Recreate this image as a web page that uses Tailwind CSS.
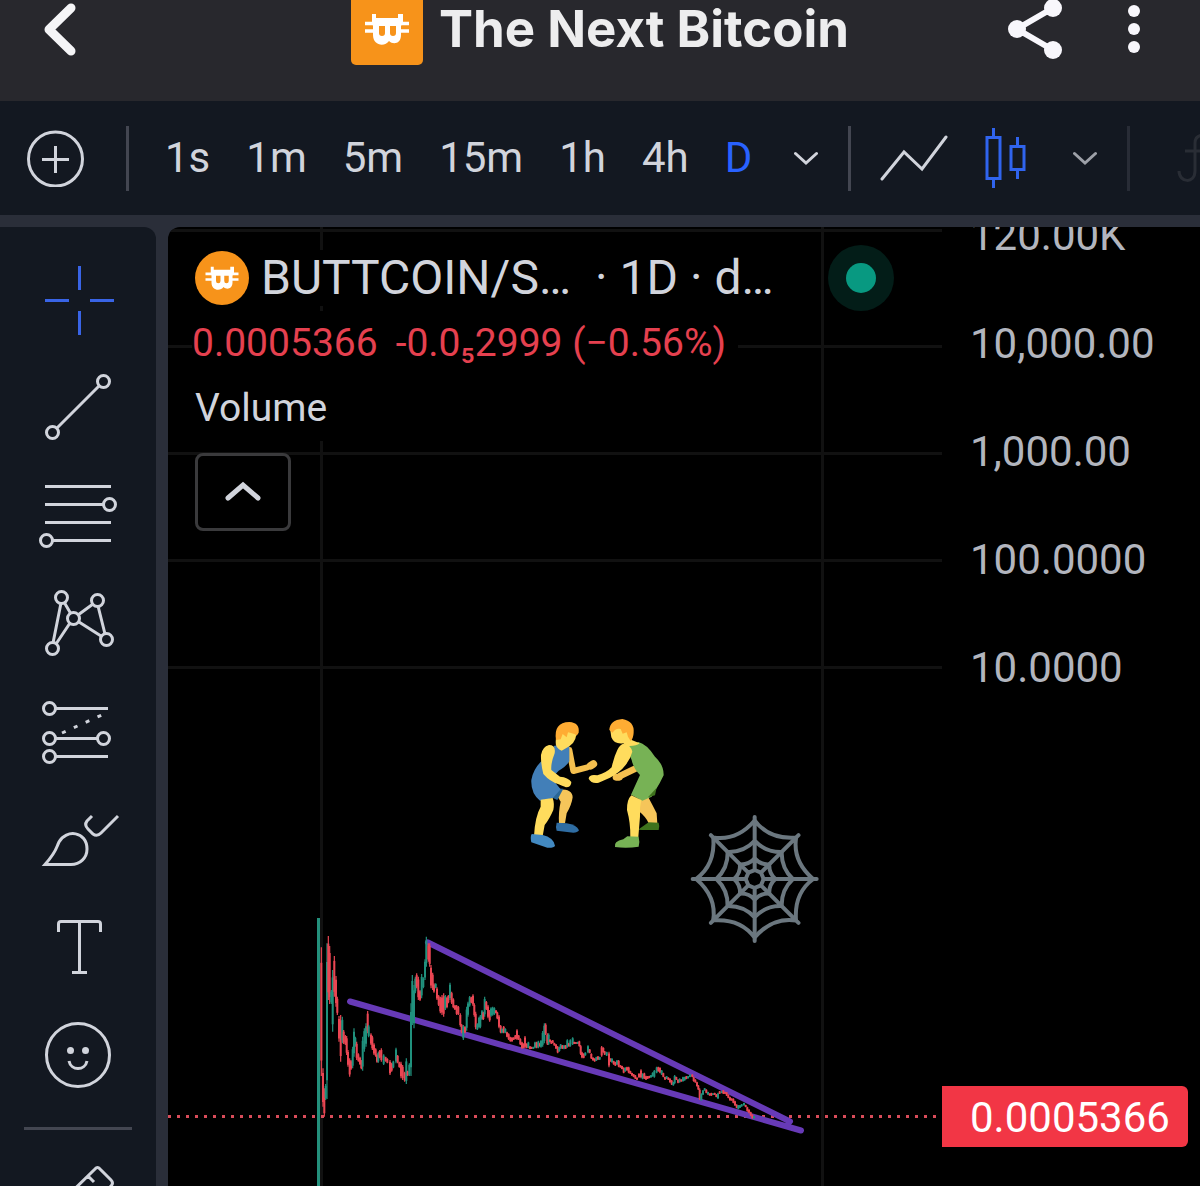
<!DOCTYPE html>
<html lang="en">
<head>
    <meta charset="UTF-8">
    <meta name="viewport" content="width=device-width, initial-scale=1.0">
    <title>The Next Bitcoin</title>
    <script src="https://cdn.jsdelivr.net/npm/@tailwindcss/browser@4"></script>
</head>
<body class="bg-[#2a2e39] font-['Roboto',sans-serif] text-[#d1d4dc]">
    <!-- Shared logo -->
    <svg class="hidden">
        <symbol id="coin" viewBox="0 0 72 72">
            <path fill="#fff" fill-rule="evenodd" d="M21 21H25V25H47V21H52V29L50 33V42C50 51 42 52 38 48C34 54 22 53 22 42V33L21 29ZM28 33V40Q28 43 31 43Q34 43 34 40V33ZM39 33V40Q39 43 42 43Q45 43 45 40V33Z" />
            <path fill="none" stroke="#fff" stroke-width="3.500" d="M14 30.500H24M14 38H24M48 30.500H58M48 38H58" />
        </symbol>
    </svg>

    <div class="flex h-screen flex-col overflow-hidden">
        <header class="h-[101px] shrink-0 bg-[#28282d]">
            <div class="relative flex h-[58px] items-center justify-between pr-[55px] pl-[40px]">
                <button aria-label="Back">
                    <svg class="h-[58px] w-[40px]" viewBox="0 0 40 58" fill="none" stroke="#f5f5f7" stroke-width="9" stroke-linecap="round" stroke-linejoin="round"><path d="M31 8L9 29.500L31 51" /></svg>
                </button>
                <div class="absolute inset-x-0 flex items-center justify-center gap-4">
                    <svg class="h-[72px] w-[72px] rounded-[5px] bg-[#f7931a]"><use href="#coin" /></svg>
                    <h1 class="font-['Inter',sans-serif] text-[51px] leading-[60px] font-bold whitespace-nowrap text-[#ededee]">The Next Bitcoin</h1>
                </div>
                <div class="relative flex items-center gap-[61px]">
                    <button aria-label="Share">
                        <svg class="h-[60px] w-[58px]" viewBox="0 0 58 60" fill="#f8f7fc" stroke="#f8f7fc"><path d="M47 9L11 30L47 51" fill="none" stroke-width="6" /><g stroke="none"><circle cx="47" cy="9" r="9" /><circle cx="11" cy="30" r="9" /><circle cx="47" cy="51" r="9" /></g></svg>
                    </button>
                    <button aria-label="More">
                        <svg class="h-[58px] w-[20px]" viewBox="0 0 20 58" fill="#f8f7fc"><circle cx="9" cy="11" r="6" /><circle cx="9" cy="29" r="6" /><circle cx="9" cy="47" r="6" /></svg>
                    </button>
                </div>
            </div>
        </header>

        <nav class="flex h-[114px] shrink-0 items-center overflow-hidden bg-[#131821] pl-[27px] text-[42px] leading-[48px]">
            <button class="shrink-0" aria-label="Compare">
                <svg class="h-[58px] w-[57px]" viewBox="0 0 57 58" fill="none" stroke="#d1d4dc" stroke-width="3"><circle cx="28.500" cy="30" r="27" /><path d="M15 30.500H42M28.500 17V44" /></svg>
            </button>
            <div class="ml-[42px] h-[65px] w-[3px] shrink-0 bg-[#434651]"></div>
            <div class="ml-[36px] flex shrink-0 gap-9">
                <button>1s</button>
                <button>1m</button>
                <button>5m</button>
                <button>15m</button>
                <button>1h</button>
                <button>4h</button>
                <button class="text-[#2962ff]">D</button>
            </div>
            <button class="ml-[42px] shrink-0" aria-label="More intervals">
                <svg class="h-[24px] w-[24px]" viewBox="0 0 24 24" fill="none" stroke="#d1d4dc" stroke-width="3" stroke-linecap="round"><path d="M1.500 7.500L12 17L22.500 7.500" /></svg>
            </button>
            <div class="ml-[30px] h-[65px] w-[3px] shrink-0 bg-[#434651]"></div>
            <button class="ml-[29px] shrink-0" aria-label="Line">
                <svg class="h-[60px] w-[68px]" viewBox="0 0 68 60" fill="none" stroke="#d1d4dc" stroke-width="3" stroke-linecap="round"><path d="M2 51L24 24L42 41L66 9" /></svg>
            </button>
            <button class="ml-[37px] shrink-0" aria-label="Candles">
                <svg class="h-[62px] w-[42px]" viewBox="0 0 42 62" fill="none" stroke="#3064ee" stroke-width="3"><path d="M8.500 1V10M8.500 52V61M2 10.500H15V51.500H2ZM32.500 10V19M32.500 43V52M26 19.500H39V42.500H26Z" /></svg>
            </button>
            <button class="ml-[46px] shrink-0" aria-label="More chart types">
                <svg class="h-[24px] w-[24px]" viewBox="0 0 24 24" fill="none" stroke="#9da0a8" stroke-width="3" stroke-linecap="round"><path d="M1.500 7.500L12 17L22.500 7.500" /></svg>
            </button>
            <div class="ml-[30px] h-[65px] w-[3px] shrink-0 bg-[#282c36]"></div>
            <button class="ml-[47px] shrink-0" aria-label="Indicators">
                <svg class="h-[60px] w-[40px]" viewBox="0 0 40 60" fill="none" stroke="#292d35" stroke-width="3"><path d="M2 43c0 12 16 13 16 0V15c0-6 4-8 10-8M8 23H28" /></svg>
            </button>
        </nav>

        <main class="flex min-h-0 flex-1 gap-3 pt-3">
            <!-- Drawing tools -->
            <aside class="flex w-[156px] shrink-0 flex-col items-center overflow-hidden rounded-tr-xl bg-[#131821] pt-[19px]">
                <button class="flex h-[108px] shrink-0 items-center" aria-label="Cross">
                    <svg class="h-[84px] w-[84px]" viewBox="0 0 84 84" fill="none" stroke="#3964e6" stroke-width="3"><path d="M43.500 8V32M43.500 53V77M9 42.500H33M54 42.500H78" /></svg>
                </button>
                <button class="flex h-[108px] shrink-0 items-center" aria-label="Trend line">
                    <svg class="h-[84px] w-[84px]" viewBox="0 0 84 84" fill="none" stroke="#d1d4dc" stroke-width="3"><path d="M21 62L63 20" /><circle cx="67.500" cy="15.500" r="6" /><circle cx="16.500" cy="66.500" r="6" /></svg>
                </button>
                <button class="flex h-[108px] shrink-0 items-center" aria-label="Fib retracement">
                    <svg class="h-[84px] w-[84px]" viewBox="0 0 84 84" fill="none" stroke="#d1d4dc" stroke-width="3"><path d="M9 12.500H75M9 30.500H68M9 48.500H75M16 66.500H75" /><circle cx="73.500" cy="30.500" r="6" /><circle cx="10.500" cy="66.500" r="6" /></svg>
                </button>
                <button class="flex h-[108px] shrink-0 items-center" aria-label="Patterns">
                    <svg class="h-[84px] w-[84px]" viewBox="0 0 84 84" fill="none" stroke="#d1d4dc" stroke-width="3"><path d="M25 21L17 61M28 20L35 32M42 33L57 22M34 41L20 62M43 40L65 54M62 24L69 52" /><circle cx="25.500" cy="15.500" r="6" /><circle cx="61.500" cy="18.500" r="6" /><circle cx="37.500" cy="36.500" r="6" /><circle cx="70.500" cy="57.500" r="6" /><circle cx="16.500" cy="66.500" r="6" /></svg>
                </button>
                <button class="flex h-[108px] shrink-0 items-center" aria-label="Prediction">
                    <svg class="h-[84px] w-[84px]" viewBox="0 0 84 84" fill="none" stroke="#d1d4dc" stroke-width="3"><path d="M19 18.500H72M19 48.500H62M19 66.500H72" /><path d="M26 43L68 24" stroke-dasharray="4 9" /><circle cx="13.500" cy="18.500" r="6" /><circle cx="13.500" cy="48.500" r="6" /><circle cx="67.500" cy="48.500" r="6" /><circle cx="13.500" cy="66.500" r="6" /></svg>
                </button>
                <button class="flex h-[108px] shrink-0 items-center" aria-label="Brush">
                    <svg class="h-[84px] w-[84px]" viewBox="0 0 84 84" fill="none" stroke="#d1d4dc" stroke-width="3"><path d="M9 66.500C21 53 20 50 23 44C30 31 51 33 51 51C51 60 44 66.500 35 66.500Z" /><path d="M56 18L51 23Q48 27 52 31L57 36Q61 39 65 35L82 18" /></svg>
                </button>
                <button class="flex h-[108px] shrink-0 items-center" aria-label="Text">
                    <svg class="h-[84px] w-[84px]" viewBox="0 0 84 84" fill="none" stroke="#d1d4dc" stroke-width="3"><path d="M22.500 26V18Q22.500 15.500 25 15.500H62Q64.500 15.500 64.500 18V26M43.500 16V66M36 66.500H51" /></svg>
                </button>
                <button class="flex h-[108px] shrink-0 items-center" aria-label="Icons">
                    <svg class="h-[84px] w-[84px]" viewBox="0 0 84 84" fill="none" stroke="#d1d4dc" stroke-width="3"><circle cx="42" cy="41" r="31.500" /><path d="M33 47C35 57 49 57 51 47" /><g fill="#d1d4dc" stroke="none"><circle cx="34.500" cy="36.500" r="3.500" /><circle cx="49.500" cy="36.500" r="3.500" /></g></svg>
                </button>
                <div class="mt-[17px] h-[3px] w-[108px] shrink-0 bg-[#434651]"></div>
                <button class="flex h-[140px] shrink-0 items-center" aria-label="Measure">
                    <svg class="h-[84px] w-[84px]" viewBox="0 0 84 84" fill="none" stroke="#d1d4dc" stroke-width="3"><path d="M59 11Q61.500 8 64 11L75 22Q78 25 75 28L28 75Q25 77 22 75L11 64Q8 61 11 58ZM52 18L58 24M42 28L50 36M32 38L38 44" /></svg>
                </button>
            </aside>

            <section class="relative flex min-w-0 flex-1 justify-between overflow-hidden rounded-tl-xl bg-black">
                <!-- Plot, drawn in window coordinates -->
                <svg class="absolute top-0 left-0 h-[959px] w-[774px]" viewBox="168 227 774 959" fill="none">
                    <path stroke="#111" stroke-width="3" d="M168 230.500H942M168 346.500H942M168 453.500H942M168 560.500H942M168 667.500H942M321.500 227V1186M822.500 227V1186" />
                    <path stroke="#d94c5a" stroke-width="3" stroke-dasharray="3 6" d="M168 1116.500H942" />
                    <path stroke="#673ab7" stroke-width="6" stroke-linecap="round" d="M428 942.500L790 1121.500M350 1001.500L801 1130.500" />
                    <path stroke="#23907c" stroke-width="3" d="M318.500 918V1186" />
                    <g id="candles"></g>

                    <!-- Wrestlers -->
                    <g transform="translate(510 700) scale(0.3333)">
                        <g stroke-linecap="round" stroke-linejoin="round">
                            <path stroke="#f5c04f" stroke-width="18" d="M178 150L190 213L232 202" />
                            <path stroke="#f5c04f" stroke-width="23" d="M242 197L250 192" />
                            <path stroke="#f5c04f" stroke-width="20" d="M372 208L330 228" />
                            <path stroke="#f5c04f" stroke-width="20" d="M318 232L328 232" />
                        </g>
                        <path fill="#f5c55a" d="M150 268Q187 268 188 292Q185 315 170 340L165 370H147Q145 335 152 305L140 285Z" />
                        <path fill="#2a6797" d="M118 265L160 266L142 300L120 290Z" />
                        <path fill="#2f6da3" d="M140 368L170 370Q200 375 207 391Q203 398 190 398L140 392Q136 380 140 368Z" />
                        <path fill="#f5c55a" d="M385 300L415 292Q430 320 440 340L442 370H416Q410 352 385 332Z" />
                        <path fill="#3e721d" d="M386 388L416 367L446 368Q450 378 446 390H396Q384 390 386 388Z" />
                        <path fill="#427fb8" d="M133 137L155 134L166 140L178 138L178 184Q168 200 146 212L125 235L152 268L128 295L90 302Q62 280 64 240Q70 205 98 180Z" />
                        <path fill="#ffdc5d" d="M92 299L128 294Q134 310 130 330Q118 358 104 375L98 408H72Q75 350 92 320Z" />
                        <path fill="#4289c1" d="M65 402L98 405Q130 412 135 437Q132 444 112 443L64 427Q60 410 65 402Z" />
                        <path fill="#ffdc5d" d="M117 135Q138 135 134 160Q122 190 124 210L150 230Q175 232 184 246Q184 262 168 262Q152 256 146 253Q120 245 100 222Q92 190 93 165Q97 140 117 135Z" />
                        <path fill="#ffdc5d" d="M140 92L200 84Q202 125 178 139L155 152Q136 145 137 126Z" />
                        <path fill="#ffac33" d="M138 120Q130 67 178 66Q210 68 206 98L200 107Q194 101 174 97L170 112L158 102L152 118Z" />
                        <path fill="#77b255" d="M345 133Q365 140 385 126Q410 132 435 170Q462 195 461 226Q450 250 437 270L425 290L397 302L363 284L390 225Q370 205 365 180Z" />
                        <path fill="#3e721d" d="M440 263L435 286L414 292Z" />
                        <path fill="#ffdc5d" d="M364 286L394 300Q388 325 390 350L385 412H361Q362 370 351 330Q350 300 364 286Z" />
                        <path fill="#77b255" d="M352 409L386 410Q390 425 386 440Q350 446 315 441Q310 425 340 418Z" />
                        <path fill="#ffdc5d" d="M340 131Q362 133 367 155Q362 175 347 195Q330 217 300 233L266 248Q244 252 236 236Q237 222 262 226Q290 218 305 202Q312 170 322 150Q330 133 340 131Z" />
                        <path fill="#ffdc5d" d="M300 84L358 84L365 120L389 130Q378 140 350 138L340 130Q313 134 304 112Z" />
                        <path fill="#ffac33" d="M298 90Q300 60 337 57Q374 64 371 98Q370 115 362 123L354 110L350 97L338 101L332 87Q316 84 308 98Z" />
                    </g>

                    <!-- Web: one wedge turned eight times -->
                    <g transform="translate(754.6667 879) scale(0.3333)" stroke="#6b777f" stroke-width="12" stroke-linecap="round">
                        <g id="wedge">
                            <path d="M0 -27V-186M0 -27L19 -19M0 -62Q18 -42 44 -44M0 -115Q32 -80 81 -81M0 -176Q42 -118 124 -124" />
                        </g>
                        <use href="#wedge" transform="rotate(45)" />
                        <use href="#wedge" transform="rotate(90)" />
                        <use href="#wedge" transform="rotate(135)" />
                        <use href="#wedge" transform="rotate(180)" />
                        <use href="#wedge" transform="rotate(225)" />
                        <use href="#wedge" transform="rotate(270)" />
                        <use href="#wedge" transform="rotate(315)" />
                    </g>
                </svg>

                <!-- Legend -->
                <div class="relative flex flex-col items-start pt-[18px] pl-[24px] whitespace-nowrap">
                    <div class="flex h-[66px] items-center pl-[3px] text-[48px] leading-[56px]">
                        <svg class="mr-3 h-[54px] w-[54px] rounded-full bg-[#f7931a]"><use href="#coin" /></svg>
                        <div class="flex bg-black">
                            <span>BUTTCOIN/S…</span>
                            <span class="ml-6">·</span>
                            <span class="ml-3">1D · d…</span>
                        </div>
                        <span class="ml-[54px] flex h-[66px] w-[66px] items-center justify-center rounded-full bg-[#031d18]">
                            <span class="h-[30px] w-[30px] rounded-full bg-[#089981]"></span>
                        </span>
                    </div>
                    <div class="flex h-[64px] items-center gap-[18px] bg-black pr-3 text-[39px] leading-[48px] text-[#e5404f]">
                        <span>0.0005366</span>
                        <span>-0.0₅2999 (−0.56%)</span>
                    </div>
                    <div class="flex h-[66px] items-center bg-black pl-[3px] text-[39px] leading-[48px]">Volume</div>
                    <button class="mt-3 ml-[3px] flex h-[78px] w-[96px] items-center justify-center rounded-lg border-3 border-[#3a3a3c]" aria-label="Collapse legend">
                        <svg class="h-[24px] w-[36px]" viewBox="0 0 36 24" fill="none" stroke="#d1d4dc" stroke-width="5" stroke-linecap="round"><path d="M3 18L18 5L33 18" /></svg>
                    </button>
                </div>

                <!-- Price scale -->
                <div class="relative -mt-[45px] flex w-[258px] shrink-0 flex-col text-[42px] leading-[48px] text-[#b2b5be]">
                    <div class="flex h-[108px] shrink-0 items-center pl-[28px]">120.00K</div>
                    <div class="flex h-[108px] shrink-0 items-center pl-[28px]">10,000.00</div>
                    <div class="flex h-[108px] shrink-0 items-center pl-[28px]">1,000.00</div>
                    <div class="flex h-[108px] shrink-0 items-center pl-[28px]">100.0000</div>
                    <div class="flex h-[108px] shrink-0 items-center pl-[28px]">10.0000</div>
                    <div class="mt-[364px] mr-3 flex h-[61px] shrink-0 items-center rounded-r-md bg-[#f23645] pt-[3px] pl-[28px] text-white">0.0005366</div>
                </div>
            </section>
        </main>
    </div>

    <script>
        // Each entry: direction, x, high, low. Three units to a pixel.
        const early = 'r64 142 528,r69 505 620,r73 565 650,g77 552 600,g81 130 597,r85 108 300,r89 138 312,g94 270 312,g98 210 395,r103 168 290,r108 228 320,r112 290 345,r117 348 425,r122 345 485,g127 350 430,r131 390 432,r136 405 435,r140 408 465,r144 450 500,r149 475 530,r153 480 510,g158 440 505,g162 385 470,g166 410 440,r170 425 480,r175 460 485,r180 470 495,r184 480 508,g188 410 512,g193 385 455,g198 370 440,r203 333 400,g206 375 412,r213 400 435,r217 407 450,r222 430 465,r227 445 470,r231 462 488,g235 455 488,r239 450 475,r244 445 485,g251 463 495,r257 470 485,r262 475 490,r270 480 525,r275 488 515,g280 482 505,g288 443 490,r293 465 490,r298 485 503,r303 485 535,r308 495 540,r314 515 545,g319 475 552,r323 512 528,g328 490 528,g333 310 528,g337 225 375,g342 255 385,g346 230 280,r350 220 265,r355 230 300,r360 270 303,g365 222 295,g370 232 265,g375 178 240,g379 110 200,r385 130 185,r389 130 200,r393 195 265,r398 218 270,r402 250 278,g407 250 265,r411 262 300,r416 285 318,r421 290 340,r426 285 345,r431 280 350,g436 285 330,r441 290 325,r445 285 310,g450 248 300,r455 275 312,r460 295 325,r465 315 330,r470 315 345,r475 318 345,r481 340 380,r485 372 400,g490 375 420,r495 378 400,g500 320 392,g504 305 350,g509 288 320,r514 290 310,r519 283 318,r523 310 350,r527 335 388,g532 370 390,g537 350 385,g541 345 385,g546 330 360,r550 335 360,g554 290 350,r559 303 330,r564 315 355,r569 330 365,g573 322 350,g578 320 347,g583 322 345,r588 330 340,r592 335 358,r597 345 385,r602 375 400,g606 385 400,r611 378 400,g616 385 400,r621 395 412,r626 400 420,r631 410 425,r636 412 425,r641 412 420,r646 405 418,r651 388 420,r656 405 420,r661 415 435,r666 425 447,r671 430 445,r675 408 445,r680 430 445,g685 425 445,r690 438 448,r695 440 447,g700 440 447,g705 425 445,r710 425 445,g715 422 445,r720 428 440';
        const late = 'g3 180 203,g8 153 200,g13 130 190,r17 130 165,r22 160 195,g26 160 195,r30 178 186,r34 182 192,r38 180 190,r43 188 197,r48 192 207,r53 198 220,g58 200 215,g62 192 207,r67 195 207,g72 195 208,r77 195 207,g82 178 203,r87 188 200,g91 178 200,g98 172 195,r103 185 192,r108 186 192,g113 185 192,r118 182 200,r122 195 225,r126 215 235,r131 220 235,g136 217 227,g144 196 220,r149 207 220,r154 220 237,r159 232 242,r164 235 245,g169 230 243,r174 228 240,g179 230 240,r185 198 230,r190 202 218,r194 213 225,g200 215 228,r207 215 262,r212 235 245,g216 235 248,r221 242 254,r226 245 258,g231 240 255,r236 240 262,r241 255 263,r246 257 268,r251 262 280,g256 262 275,r261 260 272,r266 260 280,r271 272 282,r276 278 288,r281 282 292,r286 285 297,r291 292 300,r297 280 293,r303 268 295,g308 280 298,r313 278 297,r318 287 300,r323 288 297,r328 287 295,g333 285 293,g338 277 290,g343 270 293,g350 260 280,r355 260 275,r360 262 280,g365 270 285,r370 278 292,r375 290 300,g380 288 297,r385 292 300,r390 295 308,r395 300 315,g400 305 317,g404 285 312,r409 290 300,r414 298 310,g419 295 308,r424 298 305,g429 290 305,g434 290 302,r439 288 298,g444 288 296,g450 282 292,r457 283 292,r461 290 305,r466 298 308,r471 305 320,r475 315 330,r479 325 360,g484 340 362,g489 330 345,g494 324 332,r499 328 340,g504 335 345,r509 340 347,r514 338 348,g519 340 345,r524 338 345,r529 342 352,g534 338 357,r539 333 342,g545 333 340,r550 330 342,r555 335 342,r560 336 348,r565 343 355,r570 350 362,r575 355 362,r580 355 370,r585 362 378,r590 373 385,g595 375 388,g600 375 384,g605 372 380,g612 368 377,r617 374 382,r622 380 395,r627 388 400,r632 395 408,r637 403 416,g642 408 416';

        function drawCandles(list, left, top) {
            return list.split(',').map(item => {
                const [x, high, low] = item.slice(1).split(' ').map(Number);
                const color = item[0] === 'g' ? '#20917d' : '#ea4653';
                const px = left + x / 3;
                const y1 = top + high / 3;
                const y2 = top + low / 3;
                const pad = (y2 - y1) * 0.12;
                return `<path stroke="${color}" stroke-width="1.2" d="M${px} ${y1}V${y2}"/><path stroke="${color}" stroke-width="2" d="M${px} ${y1 + pad}V${y2 - pad}"/>`;
            }).join('');
        }

        document.getElementById('candles').innerHTML = drawCandles(early, 300, 900) + drawCandles(late, 540, 980);
    </script>
</body>
</html>
